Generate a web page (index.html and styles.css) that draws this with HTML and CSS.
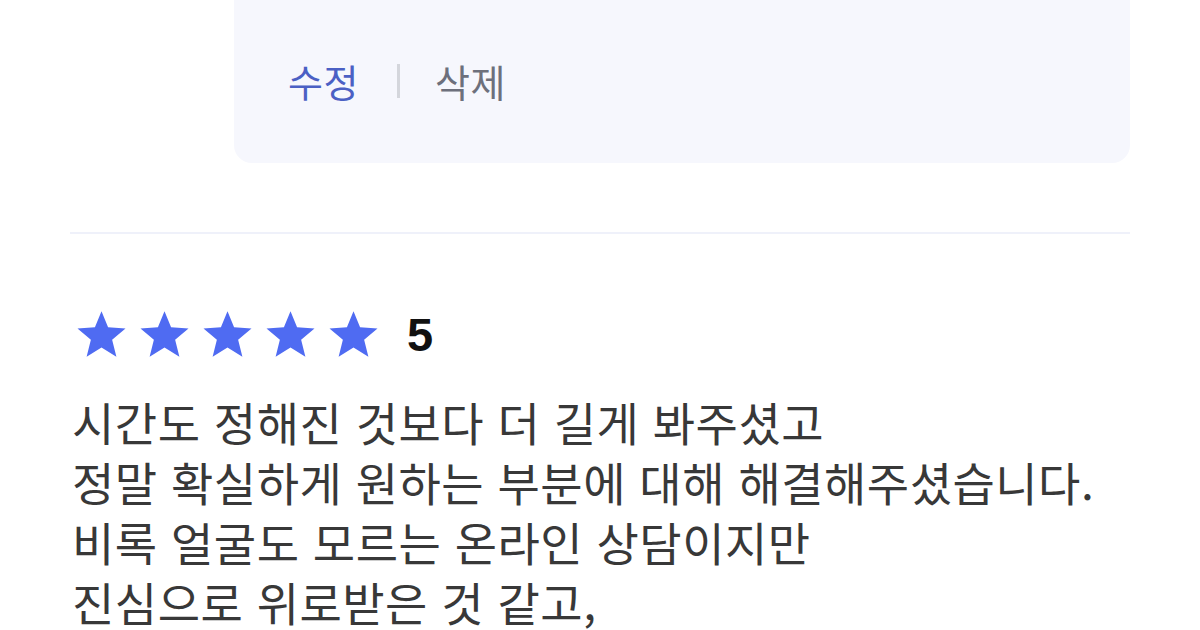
FILE: index.html
```html
<!DOCTYPE html>
<html lang="ko">
<head>
<meta charset="utf-8">
<link rel="stylesheet" href="styles.css">
</head>
<body>
<div class="page">
  <div class="reply-card">
    <div class="actions">
      <span class="act edit">수정</span>
      <span class="sep"></span>
      <span class="act del">삭제</span>
    </div>
  </div>
  <div class="divider"></div>
  <div class="review">
    <div class="rating">
      <div class="stars">
        <svg class="star" viewBox="0 0 24 23"><path d="M12 0.5l3.1 7.6 8.2 0.6-6.3 5.3 2 8-7-4.4-7 4.4 2-8L0.7 8.7l8.2-0.6z"/></svg>
        <svg class="star" viewBox="0 0 24 23"><path d="M12 0.5l3.1 7.6 8.2 0.6-6.3 5.3 2 8-7-4.4-7 4.4 2-8L0.7 8.7l8.2-0.6z"/></svg>
        <svg class="star" viewBox="0 0 24 23"><path d="M12 0.5l3.1 7.6 8.2 0.6-6.3 5.3 2 8-7-4.4-7 4.4 2-8L0.7 8.7l8.2-0.6z"/></svg>
        <svg class="star" viewBox="0 0 24 23"><path d="M12 0.5l3.1 7.6 8.2 0.6-6.3 5.3 2 8-7-4.4-7 4.4 2-8L0.7 8.7l8.2-0.6z"/></svg>
        <svg class="star" viewBox="0 0 24 23"><path d="M12 0.5l3.1 7.6 8.2 0.6-6.3 5.3 2 8-7-4.4-7 4.4 2-8L0.7 8.7l8.2-0.6z"/></svg>
      </div>
      <span class="score">5</span>
    </div>
    <p class="text">시간도 정해진 것보다 더 길게 봐주셨고<br>정말 확실하게 원하는 부분에 대해 해결해주셨습니다.<br>비록 얼굴도 모르는 온라인 상담이지만<br>진심으로 위로받은 것 같고,</p>
  </div>
</div>
</body>
</html>
```
FILE: styles.css
```css
html, body {
  margin: 0;
  padding: 0;
  background: #ffffff;
  overflow: hidden;
}
body {
  width: 1200px;
  height: 630px;
  font-family: "Noto Sans CJK KR", "Noto Sans", sans-serif;
}
.page {
  padding: 0 70px;
}
.reply-card {
  margin-left: 164px;
  margin-top: -40px;
  padding: 96px 54px 57px;
  background: #f6f7fd;
  border-radius: 18px;
}
.actions {
  display: flex;
  align-items: center;
  height: 50px;
}
.act {
  font-size: 38px;
  line-height: 50px;
  letter-spacing: 0.5px;
}
.edit { color: #4b60c4; }
.del { color: #6d707c; }
.sep {
  width: 3px;
  height: 34px;
  background: #d4d6dc;
  margin: 0 35px 0 38px;
}
.divider {
  margin-top: 69px;
  height: 2px;
  background: #eff1fa;
}
.review {
  padding-top: 74px;
}
.rating {
  display: flex;
  align-items: center;
  height: 52px;
}
.stars {
  display: flex;
  gap: 12px;
  margin-left: 6px;
}
.star {
  width: 51px;
  height: 49px;
  fill: #4f6bf2;
  display: block;
}
.score {
  margin-left: 28px;
  font-family: "Liberation Sans", Arial, sans-serif;
  font-weight: bold;
  font-size: 47px;
  color: #111;
  line-height: 1;
}
.text {
  margin: 31px 0 0 2px;
  font-size: 46px;
  line-height: 60px;
  letter-spacing: 0.5px;
  color: #383838;
  white-space: nowrap;
}
```
